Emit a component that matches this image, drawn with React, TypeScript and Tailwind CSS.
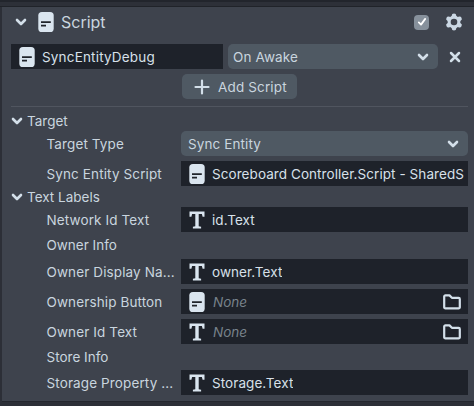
import React from "react";

const Chevron = ({ className = "" }: { className?: string }) => (
  <svg
    viewBox="0 0 12 8"
    className={`h-2 w-3 shrink-0 fill-none stroke-[#d3dfe9] ${className}`}
    strokeWidth="2.6"
    strokeLinecap="round"
    strokeLinejoin="round"
  >
    <path d="M2 2l4 4 4-4" />
  </svg>
);

const ScriptIcon = ({ className = "" }: { className?: string }) => (
  <svg viewBox="0 0 16 20" className={`h-5 w-4 shrink-0 ${className}`}>
    <rect width="15.4" height="20" x="0.3" rx="3.6" fill="#dae5ef" />
    <path d="M3 10.1h9.800M3 13.700h5" stroke="#20242b" strokeWidth="1.8" />
  </svg>
);

const TextIcon = () => (
  <svg viewBox="0 0 16 18" className="h-[18px] w-4 shrink-0 fill-[#dae5ef]">
    <path d="M.5.5h15v5.2h-1.9l-.7-2.6H9.7v12.1l2.4.5v1.8H3.9v-1.8l2.4-.5V3.100H3.100l-.7 2.600H.5z" />
  </svg>
);

const FolderIcon = () => (
  <svg
    viewBox="0 0 18 16"
    className="h-4 w-[18px] shrink-0 fill-none stroke-[#d3dfe9]"
    strokeWidth="2.2"
    strokeLinejoin="round"
  >
    <path d="M1.200 2.600a1.200 1.200 0 0 1 1.200-1.200h4.100l2.400 2.400h6.700a1.200 1.200 0 0 1 1.200 1.200v8.200a1.200 1.200 0 0 1-1.200 1.200H2.400a1.200 1.200 0 0 1-1.200-1.200z" />
  </svg>
);

const GearIcon = () => (
  <svg viewBox="0 0 18 18" className="h-[18px] w-[18px] shrink-0">
    <g stroke="#cbd8e4" strokeWidth="4.600" strokeLinecap="round">
      <path d="M9 2.700v12.600M3.500 5.850l11 6.300M3.500 12.150l11-6.300" />
    </g>
    <circle cx="9" cy="9" r="6.400" fill="#cbd8e4" />
    <circle cx="9" cy="9" r="3.300" fill="#3e434d" />
  </svg>
);

type FieldProps = {
  label: string;
  icon: "script" | "text";
  value?: string;
  className?: string;
};

const Field = ({ label, icon, value, className = "" }: FieldProps) => (
  <div className={`flex h-[25px] items-center ${className}`}>
    <span className="w-[134.500px] shrink-0 tracking-[0.12px] whitespace-nowrap">
      {label}
    </span>
    <div className="flex h-[25px] min-w-0 flex-1 items-center bg-[#1e222a] pr-1 pl-2">
      {icon === "script" ? <ScriptIcon /> : <TextIcon />}
      {value ? (
        <span className="ml-[7px] overflow-hidden tracking-[0.07px] whitespace-nowrap text-[#d7e0e9]">
          {value}
        </span>
      ) : (
        <>
          <span className="ml-[8px] flex-1 text-[#78828c] italic">None</span>
          <div className="mr-[3px]">
            <FolderIcon />
          </div>
        </>
      )}
    </div>
  </div>
);

const Section = ({ title, className }: { title: string; className: string }) => (
  <div className={`flex h-[18px] items-center ${className}`}>
    <Chevron />
    <span className="ml-1">{title}</span>
  </div>
);

const App = () => {
  return (
    <div className="flex h-[406px] w-[474px] flex-col overflow-hidden bg-[#2c2f37] font-['Inter',sans-serif] text-[13.5px] leading-[18px] text-[#c9d5df]">
      <div className="h-[2px] shrink-0 bg-[#22252c]" />
      <div className="h-[5px] shrink-0 border-b border-[#202329] bg-[#2d3038]" />
      <div className="ml-[2px] h-[395px] shrink-0 border-b border-[#24272e] bg-[#3e434d] pr-[6px] pl-[9px]">
        <div className="flex h-[30px] items-center pl-1">
          <Chevron />
          <ScriptIcon className="ml-[11px]" />
          <span className="ml-[7px] text-[16px]">Script</span>
          <div className="mr-4 ml-auto flex h-[15px] w-[15px] items-center justify-center rounded-[4px] bg-[#87919c]">
            <svg
              viewBox="0 0 10 10"
              className="h-[10px] w-[10px] fill-none stroke-white"
              strokeWidth="1.8"
              strokeLinecap="round"
              strokeLinejoin="round"
            >
              <path d="M1.800 5.400l2.200 2.200 4.200-5.700" />
            </svg>
          </div>
          <GearIcon />
          <div className="w-[5px]" />
        </div>

        <div className="mt-[7px] flex h-[25px] items-center">
          <div className="flex h-[25px] w-[212px] items-center bg-[#1e222a] pl-2 text-[#d7e0e9]">
            <ScriptIcon />
            <span className="ml-[7px] tracking-[0.18px]">SyncEntityDebug</span>
          </div>
          <div className="ml-[5px] flex h-[25px] w-[210px] items-center justify-between rounded-[5px] bg-[#4f5963] pr-[9px] pl-[5px]">
            <span className="tracking-[0.1px]">On Awake</span>
            <Chevron />
          </div>
          <svg
            viewBox="0 0 12 12"
            className="ml-[11px] h-3 w-3 stroke-[#d3dfe9]"
            strokeWidth="2.5"
            strokeLinecap="round"
          >
            <path d="M2 2l8 8M10 2l-8 8" />
          </svg>
        </div>

        <div className="mt-[5px] ml-[171px] flex h-[25px] w-[115px] items-center rounded-[5px] bg-[#4f5963] pl-3">
          <svg
            viewBox="0 0 16 16"
            className="h-4 w-4 stroke-[#d3dfe9]"
            strokeWidth="2.2"
            strokeLinecap="round"
          >
            <path d="M8 1.500v13M1.500 8h13" />
          </svg>
          <span className="ml-[8px] tracking-[0.15px] whitespace-nowrap">
            Add Script
          </span>
        </div>

        <div className="mt-[7px] h-px bg-[#50555f]" />

        <Section title="Target" className="mt-[5px]" />
        <div className="mt-px pl-[35.500px]">
          <div className="flex h-[25px] items-center">
            <span className="w-[134.500px] shrink-0 tracking-[0.12px]">
              Target Type
            </span>
            <div className="flex h-[25px] flex-1 items-center justify-between rounded-[5px] bg-[#4f5963] pr-[9px] pl-[7px]">
              <span className="tracking-[0.1px]">Sync Entity</span>
              <Chevron />
            </div>
          </div>
          <Field
            label="Sync Entity Script"
            icon="script"
            value="Scoreboard Controller.Script - SharedScoreboard"
            className="mt-[5px]"
          />
        </div>

        <Section title="Text Labels" className="mt-[2px]" />
        <div className="pl-[35.500px]">
          <Field label="Network Id Text" icon="text" value="id.Text" className="mt-px" />
          <div className="mt-[4px] h-[18px]">Owner Info</div>
          <Field
            label="Owner Display Na..."
            icon="text"
            value="owner.Text"
            className="mt-[5px]"
          />
          <Field label="Ownership Button" icon="script" className="mt-[5px]" />
          <Field label="Owner Id Text" icon="text" className="mt-[5px]" />
          <div className="mt-[4px] h-[18px]">Store Info</div>
          <Field
            label="Storage Property ..."
            icon="text"
            value="Storage.Text"
            className="mt-[4px]"
          />
        </div>
      </div>
    </div>
  );
};

export default App;
